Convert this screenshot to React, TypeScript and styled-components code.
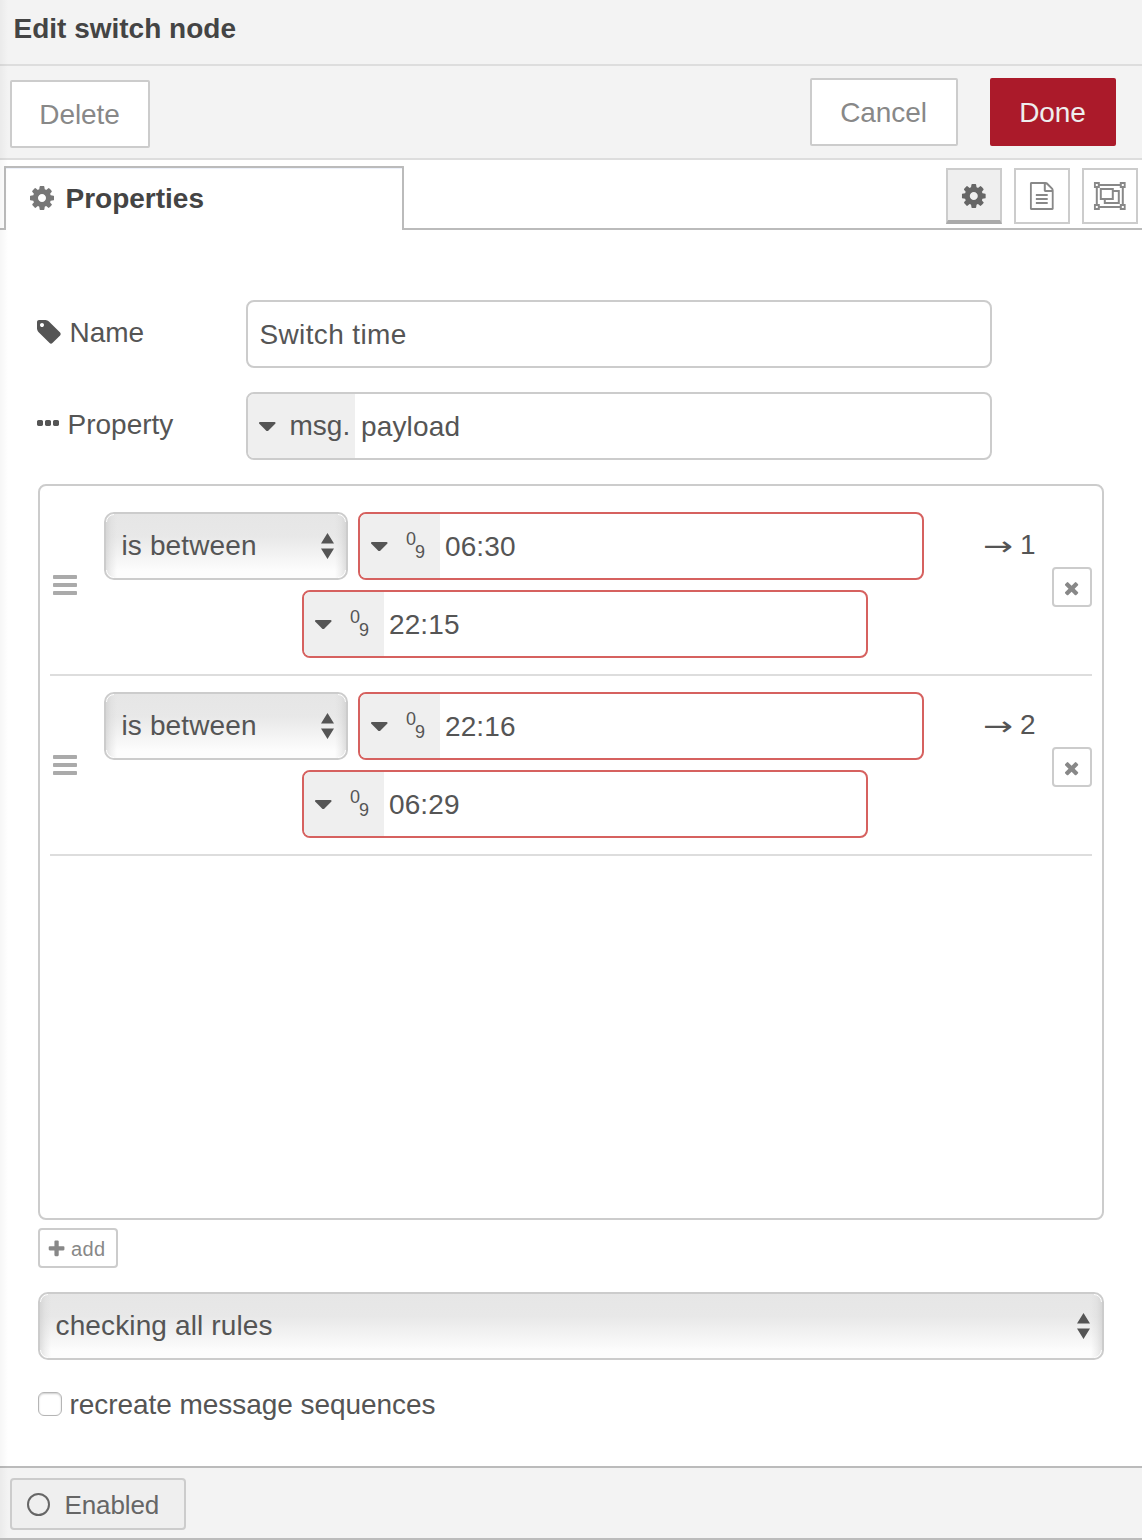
import React from 'react';
import styled, { createGlobalStyle, css } from 'styled-components';

const GlobalStyle = createGlobalStyle`
  *, *::before, *::after { box-sizing: border-box; }
  body {
    margin: 0;
    background: #fff;
    color: #555;
    font: 28px/40px "Liberation Sans", Arial, sans-serif;
  }
  button, input { font: inherit; color: inherit; margin: 0; letter-spacing: inherit; }
`;

const GLYPHS = {
  cog: 'M1152 896q0-106-75-181t-181-75-181 75-75 181 75 181 181 75 181-75 75-181zm512-109v222q0 12-8 23t-20 13l-185 28q-19 54-39 91 35 50 107 138 10 12 10 25t-9 23q-27 37-99 108t-94 71q-12 0-26-9l-138-108q-44 23-91 38-16 136-29 186-7 28-36 28h-222q-14 0-24.5-8.5t-11.5-21.5l-28-184q-49-16-90-37l-141 107q-10 9-25 9-14 0-25-11-126-114-165-168-7-10-7-23 0-12 8-23 15-21 51-66.5t54-70.5q-27-50-41-99l-183-27q-13-2-21-12.5t-8-23.5v-222q0-12 8-23t19-13l186-28q14-46 39-92-40-57-107-138-10-12-10-24 0-10 9-23 26-36 98.5-107.5t94.5-71.5q13 0 26 10l138 107q44-23 91-38 16-136 29-186 7-28 36-28h222q14 0 24.5 8.5t11.5 21.5l28 184q49 16 90 37l142-107q9-9 24-9 13 0 25 10 129 119 165 170 7 8 7 22 0 12-8 23-15 21-51 66.5t-54 70.5q26 50 41 98l183 28q13 2 21 12.5t8 23.5z',
  tag: 'M576 448q0-53-37.5-90.5t-90.5-37.5-90.5 37.5-37.5 90.5 37.5 90.5 90.5 37.5 90.5-37.5 37.5-90.5zm1067 576q0 53-37 90l-491 492q-39 37-91 37-53 0-90-37l-715-716q-38-37-64.5-101t-26.5-117v-416q0-52 38-90t90-38h416q53 0 117 26.5t102 64.5l715 714q37 39 37 91z',
  dots: 'M576 736v192q0 40-28 68t-68 28h-192q-40 0-68-28t-28-68v-192q0-40 28-68t68-28h192q40 0 68 28t28 68zm512 0v192q0 40-28 68t-68 28h-192q-40 0-68-28t-28-68v-192q0-40 28-68t68-28h192q40 0 68 28t28 68zm512 0v192q0 40-28 68t-68 28h-192q-40 0-68-28t-28-68v-192q0-40 28-68t68-28h192q40 0 68 28t28 68z',
  file: 'M1596 380q28 28 48 76t20 88v1152q0 40-28 68t-68 28h-1344q-40 0-68-28t-28-68v-1600q0-40 28-68t68-28h896q40 0 88 20t76 48zm-444-244v376h376q-10-29-22-41l-313-313q-12-12-41-22zm384 1528v-1024h-416q-40 0-68-28t-28-68v-416h-768v1536h1280zm-1024-864q0-14 9-23t23-9h704q14 0 23 9t9 23v64q0 14-9 23t-23 9h-704q-14 0-23-9t-9-23v-64zm736 224q14 0 23 9t9 23v64q0 14-9 23t-23 9h-704q-14 0-23-9t-9-23v-64q0-14 9-23t23-9h704zm0 256q14 0 23 9t9 23v64q0 14-9 23t-23 9h-704q-14 0-23-9t-9-23v-64q0-14 9-23t23-9h704z',
  group: 'M2048 384h-128v1024h128v384h-384v-128h-1280v128h-384v-384h128v-1024h-128v-384h384v128h1280v-128h384v384zM1792 128v128h128v-128zM128 128v128h128v-128zM256 1664v-128h-128v128zM1664 1536v-128h128v-1024h-128v-128h-1280v128h-128v1024h128v128zM1920 1664v-128h-128v128zM1280 512h384v896h-1024v-256h-256v-768h896zM512 1024h640v-512h-640zM1536 1280v-640h-256v512h-512v128z',
  bars: 'M1664 1344v128q0 26-19 45t-45 19h-1408q-26 0-45-19t-19-45v-128q0-26 19-45t45-19h1408q26 0 45 19t19 45zm0-512v128q0 26-19 45t-45 19h-1408q-26 0-45-19t-19-45v-128q0-26 19-45t45-19h1408q26 0 45 19t19 45zm0-512v128q0 26-19 45t-45 19h-1408q-26 0-45-19t-19-45v-128q0-26 19-45t45-19h1408q26 0 45 19t19 45z',
  times: 'M1490 1322q0 40-28 68l-136 136q-28 28-68 28t-68-28l-294-294-294 294q-28 28-68 28t-68-28l-136-136q-28-28-28-68t28-68l294-294-294-294q-28-28-28-68t28-68l136-136q28-28 68-28t68 28l294 294 294-294q28-28 68-28t68 28l136 136q28 28 28 68t-28 68l-294 294 294 294q28 28 28 68z',
  plus: 'M1600 736v192q0 40-28 68t-68 28h-416v416q0 40-28 68t-68 28h-192q-40 0-68-28t-28-68v-416h-416q-40 0-68-28t-28-68v-192q0-40 28-68t68-28h416v-416q0-40 28-68t68-28h192q40 0 68 28t28 68v416h416q40 0 68 28t28 68z',
  caret: 'M1408 704q0 26-19 45l-448 448q-19 19-45 19t-45-19l-448-448q-19-19-19-45t19-45 45-19h896q26 0 45 19t19 45z',
};

const Svg = styled.svg<{ $w: number; $h: number }>`
  display: block;
  flex: none;
  width: ${(p) => p.$w}px;
  height: ${(p) => p.$h}px;
  fill: currentColor;
`;

/* Left edge and width of each glyph inside the shared 1792-unit em. */
function crop(name: keyof typeof GLYPHS) {
  if (name === 'group') return [0, 2048];
  if (name === 'dots') return [192, 1536];
  return [128, 1536];
}

function Icon({ name, size = 28 }: { name: keyof typeof GLYPHS; size?: number }) {
  const [left, units] = crop(name);
  return (
    <Svg $w={(size * units) / 1792} $h={size} viewBox={`${left} 0 ${units} 1792`} fillRule="evenodd" aria-hidden>
      <path d={GLYPHS[name]} />
    </Svg>
  );
}

const Tray = styled.main`
  display: flex;
  flex-direction: column;
  width: 1142px;
  height: 1540px;
  overflow: hidden;
  border-bottom: 2px solid #bbb;
  background: #fff;
  position: relative;

  &::before {
    content: '';
    position: absolute;
    z-index: 1;
    inset: 0 auto 0 0;
    width: 8px;
    background: linear-gradient(to right, rgba(0, 0, 0, 0.035), transparent);
  }
`;

const Header = styled.header`
  flex: none;
  height: 66px;
  padding: 9px 14px 0 13.5px;
  border-bottom: 2px solid #ddd;
  background: #f3f3f3;
  color: #444;
  font-weight: bold;
`;

const Toolbar = styled.div`
  display: flex;
  flex: none;
  align-items: flex-start;
  height: 94px;
  padding: 12px 26px 0 10px;
  gap: 32px;
  border-bottom: 2px solid #ddd;
  background: #f3f3f3;
`;

const ToolButton = styled.button<{ $primary?: boolean; $first?: boolean; $width: number }>`
  width: ${(p) => p.$width}px;
  height: 68px;
  padding: 1px 1px 0 0;
  border: 2px solid ${(p) => (p.$primary ? '#ab1a2a' : '#ccc')};
  border-radius: 2px;
  background: ${(p) => (p.$primary ? '#ab1a2a' : '#fff')};
  color: ${(p) => (p.$primary ? '#eee' : '#888')};
  letter-spacing: -0.1px;
  ${(p) => p.$first && css`margin: 2px auto 0 0;`}
`;

const Tabs = styled.div`
  display: flex;
  flex: none;
  height: 70px;
  padding-top: 6px;
`;

const TabRule = styled.div<{ $width?: number }>`
  ${(p) => (p.$width ? css`width: ${p.$width}px;` : css`flex: 1;`)}
  display: flex;
  justify-content: flex-end;
  gap: 12px;
  padding: 2px 4px 0 0;
  border-bottom: 2px solid #bbb;
`;

const Tab = styled.div`
  display: flex;
  gap: 12px;
  width: 400px;
  padding: 0 0 0 23.5px;
  align-items: center;
  border: 2px solid #bbb;
  border-bottom: 0;
  border-radius: 1px 1px 0 0;
  box-shadow: inset 0 1px #edf1fa;
  color: #444;
  font-weight: bold;

  svg { color: #777; margin-bottom: 2px; }
`;

const TabButton = styled.button<{ $active?: boolean }>`
  display: flex;
  align-items: center;
  justify-content: center;
  width: 56px;
  height: 56px;
  padding: 0 1px 0 0;
  border: 2px solid #ccc;
  background: #fff;
  color: #888;
  ${(p) => p.$active && css`
    border-bottom: 4px solid #aaa;
    padding-top: 2px;
    background: #efefef;
    color: #666;
  `}

  svg { transform: translateX(-0.2px); }
`;

const Form = styled.form`
  flex: 1;
  display: flex;
  flex-direction: column;
  align-items: flex-start;
  padding: 70px 38px 0;
`;

const FormRow = styled.div`
  display: flex;
  height: 68px;
  margin-bottom: 24px;
`;

const Label = styled.label<{ $gap: number }>`
  display: flex;
  align-items: center;
  gap: ${(p) => p.$gap}px;
  width: 208px;
  height: 64px;

  svg { margin-left: -1px; }
  span { padding-top: 2px; }
`;

const Field = styled.div<{ $width: number; $invalid?: boolean }>`
  display: flex;
  width: ${(p) => p.$width}px;
  height: 68px;
  border: 2px solid ${(p) => (p.$invalid ? '#d6615f' : '#ccc')};
  border-radius: 8px;
  background: #fff;
  overflow: hidden;
`;

const Input = styled.input<{ $pad: number; $tracking?: number }>`
  flex: 1;
  min-width: 0;
  height: 64px;
  padding: 1px 0 0 ${(p) => p.$pad}px;
  border: 0;
  outline: 0;
  background: transparent;
  letter-spacing: ${(p) => p.$tracking ?? 0}px;
`;

const TypeTrigger = styled.button<{ $width: number }>`
  display: flex;
  align-items: center;
  gap: 14px;
  width: ${(p) => p.$width}px;
  height: 64px;
  padding: 0 0 0 11px;
  border: 0;
  background: #efefef;
`;

const CaretSvg = styled(Svg)`
  margin-top: 1px;
`;

const Digits = styled.span`
  display: flex;
  align-items: flex-start;
  height: 34px;
  padding-left: 4.5px;
  font-size: 18px;
  line-height: 20px;

  span + span {
    margin: 13px 0 0 -1px;
  }
`;

const RuleList = styled.ol`
  width: 1066px;
  height: 736px;
  margin: 0;
  padding: 10px;
  list-style: none;
  border: 2px solid #ccc;
  border-radius: 8px;
`;

const RuleItem = styled.li`
  display: grid;
  grid-template-columns: 54px 1fr 40px;
  align-items: center;
  height: 180px;
  padding-top: 16px;
  border-bottom: 2px solid #ddd;
`;

const Handle = styled.span`
  padding: 0 0 16px 3.4px;
  color: #aaa;
`;

const RuleBody = styled.div`
  display: flex;
  flex-direction: column;
  gap: 10px;
  align-self: start;
`;

const RuleLine = styled.div<{ $indent?: number }>`
  display: flex;
  gap: 10px;
  padding-left: ${(p) => p.$indent ?? 0}px;
`;

const Output = styled.span`
  display: flex;
  gap: 8px;
  margin-left: 50px;
  padding-top: 1px;
  line-height: 64px;
`;

const Arrow = styled.span`
  width: 28px;
  font-family: "DejaVu Sans", sans-serif;
  text-align: center;
  transform: translateY(1.5px) scale(1.28, 0.95);
`;

const RemoveButton = styled.button`
  display: flex;
  align-items: center;
  justify-content: center;
  width: 40px;
  height: 40px;
  margin-bottom: 12px;
  padding: 2px 1px 0 0;
  border: 2px solid #ccc;
  border-radius: 4px;
  background: #fff;
  color: #888;
`;

const SelectBox = styled.div<{ $width: number }>`
  display: flex;
  align-items: center;
  justify-content: space-between;
  position: relative;
  width: ${(p) => p.$width}px;
  height: 68px;
  padding: 0 12px 0 15.5px;
  border: 2px solid #ccc;
  border-radius: 10px;
  letter-spacing: 0.13px;
  background:
    linear-gradient(to right, rgba(200, 200, 200, 0.55), rgba(215, 215, 215, 0.35) 5px, rgba(225, 225, 225, 0)) left / 11px 100% no-repeat padding-box,
    linear-gradient(to left, rgba(200, 200, 200, 0.55), rgba(215, 215, 215, 0.35) 5px, rgba(225, 225, 225, 0)) right / 11px 100% no-repeat padding-box,
    linear-gradient(#e6e6e6 0%, #e8e8e8 35%, #fdfdfd 90%) padding-box;

  &::after {
    content: '';
    position: absolute;
    inset: 0;
    border: 1px solid #fff;
    border-radius: 8px;
    mask:
      linear-gradient(#000, #000) 0 0 / 8px 8px no-repeat,
      linear-gradient(#000, #000) 100% 0 / 8px 8px no-repeat,
      linear-gradient(#000, #000) 0 100% / 8px 8px no-repeat,
      linear-gradient(#000, #000) 100% 100% / 8px 8px no-repeat;
  }
`;

const AddButton = styled.button`
  display: flex;
  align-items: center;
  gap: 6.5px;
  width: 80px;
  height: 40px;
  margin: 8px 0 24px;
  padding: 0 0 0 9.4px;
  border: 2px solid #ccc;
  border-radius: 4px;
  background: #fff;
  color: #888;
  font-size: 20px;
  line-height: 24px;
  letter-spacing: 0.3px;

  span { padding-top: 2px; }
  svg { margin: 2px -1px 0; }
`;

const CheckLabel = styled.label`
  display: flex;
  align-items: center;
  gap: 7.5px;
  height: 40px;
  margin-top: 24px;
  white-space: nowrap;
  letter-spacing: -0.05px;

  span { padding-top: 2px; }
`;

const CheckBox = styled.input`
  appearance: none;
  width: 24px;
  height: 24px;
  border: 1.5px solid #b5b5b5;
  border-radius: 6px;
  background: #fff;
  box-shadow: inset 0 1px 2px rgba(0, 0, 0, 0.2);
`;

const Footer = styled.footer`
  flex: none;
  height: 72px;
  padding: 10px;
  border-top: 2px solid #bbb;
  background: #f3f3f3;
`;

const EnabledButton = styled.button`
  display: flex;
  align-items: center;
  gap: 14.5px;
  width: 176px;
  height: 52px;
  padding: 0 0 0 15px;
  border: 2px solid #ccc;
  border-radius: 4px;
  background: #efefef;
  color: #666;
  font-size: 26px;
  letter-spacing: -0.1px;

  span + span { padding-top: 2px; }
`;

const Ring = styled.span`
  width: 23px;
  height: 23px;
  border: 2px solid #666;
  border-radius: 50%;
`;

function Caret() {
  return (
    <CaretSvg $w={16.5} $h={9.3} viewBox="384 640 1024 576" aria-hidden>
      <path d={GLYPHS.caret} />
    </CaretSvg>
  );
}

function Select({ width, children }: { width: number; children: React.ReactNode }) {
  return (
    <SelectBox $width={width} role="combobox">
      {children}
      <Svg $w={13} $h={26} viewBox="0 0 13 26" aria-hidden>
        <path d="M6.5 0L13 10.5H0zM0 15.5h13L6.5 26z" />
      </Svg>
    </SelectBox>
  );
}

function NumberField({ value }: { value: string }) {
  return (
    <Field $width={566} $invalid>
      <TypeTrigger type="button" $width={80}>
        <Caret />
        <Digits><span>0</span><span>9</span></Digits>
      </TypeTrigger>
      <Input $pad={5} $tracking={0.1} defaultValue={value} />
    </Field>
  );
}

const RULES = [
  { from: '06:30', to: '22:15' },
  { from: '22:16', to: '06:29' },
];

export default function App() {
  return (
    <>
      <GlobalStyle />
      <Tray>
        <Header>Edit switch node</Header>
        <Toolbar>
          <ToolButton $width={140} $first>Delete</ToolButton>
          <ToolButton $width={148}>Cancel</ToolButton>
          <ToolButton $width={126} $primary>Done</ToolButton>
        </Toolbar>
        <Tabs>
          <TabRule $width={4} />
          <Tab><Icon name="cog" />Properties</Tab>
          <TabRule>
            <TabButton $active><Icon name="cog" /></TabButton>
            <TabButton><Icon name="file" /></TabButton>
            <TabButton><Icon name="group" /></TabButton>
          </TabRule>
        </Tabs>
        <Form>
          <FormRow>
            <Label $gap={8.5}><Icon name="tag" /><span>Name</span></Label>
            <Field $width={746}><Input $pad={11.5} $tracking={0.36} defaultValue="Switch time" /></Field>
          </FormRow>
          <FormRow>
            <Label $gap={6.5}><Icon name="dots" /><span>Property</span></Label>
            <Field $width={746}>
              <TypeTrigger type="button" $width={107}><Caret />msg.</TypeTrigger>
              <Input $pad={6} $tracking={0.15} defaultValue="payload" />
            </Field>
          </FormRow>
          <RuleList>
            {RULES.map((rule, i) => (
              <RuleItem key={rule.from}>
                <Handle><Icon name="bars" /></Handle>
                <RuleBody>
                  <RuleLine>
                    <Select width={244}>is between</Select>
                    <NumberField value={rule.from} />
                    <Output><Arrow>→</Arrow>{i + 1}</Output>
                  </RuleLine>
                  <RuleLine $indent={198}>
                    <NumberField value={rule.to} />
                  </RuleLine>
                </RuleBody>
                <RemoveButton type="button"><Icon name="times" size={20} /></RemoveButton>
              </RuleItem>
            ))}
          </RuleList>
          <AddButton type="button"><Icon name="plus" size={20} /><span>add</span></AddButton>
          <Select width={1066}>checking all rules</Select>
          <CheckLabel><CheckBox type="checkbox" /><span>recreate message sequences</span></CheckLabel>
        </Form>
        <Footer>
          <EnabledButton><Ring /><span>Enabled</span></EnabledButton>
        </Footer>
      </Tray>
    </>
  );
}
